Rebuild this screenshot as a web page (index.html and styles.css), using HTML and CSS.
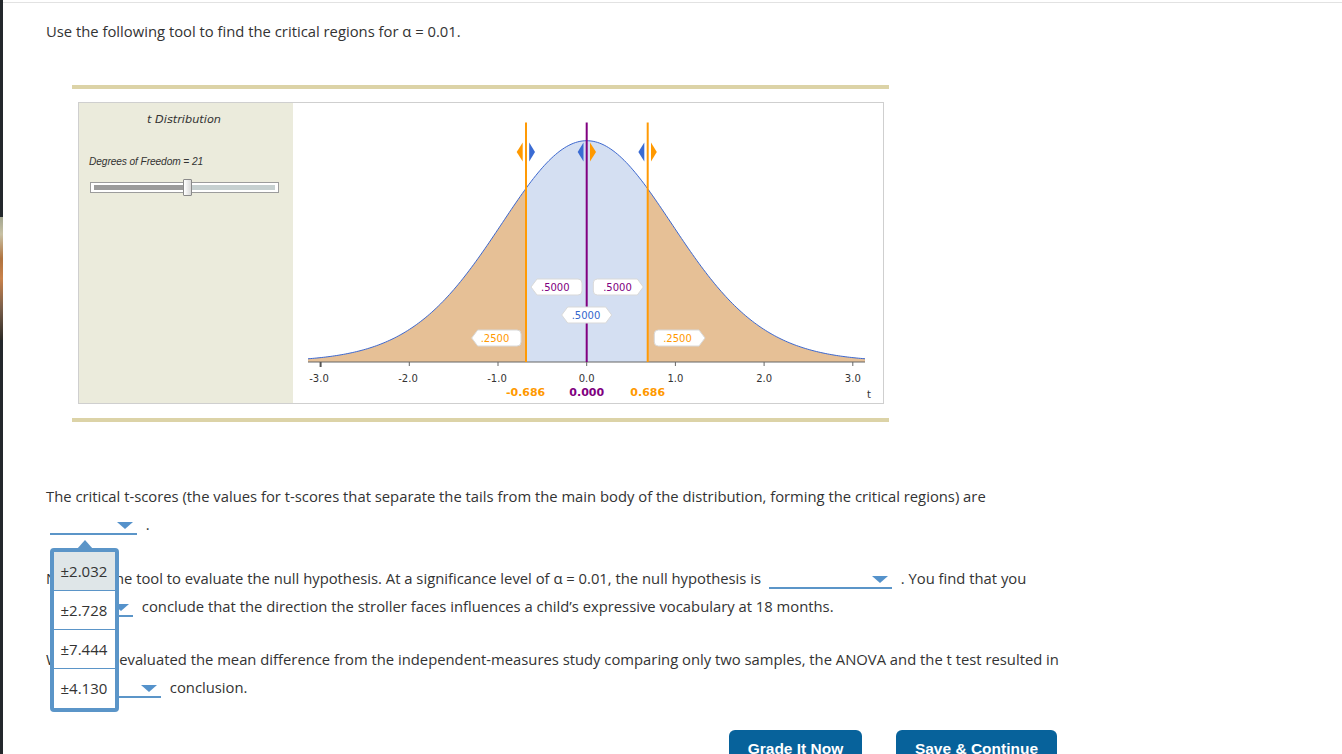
FILE: index.html
```html
<!DOCTYPE html>
<html lang="en">
<head>
<meta charset="utf-8">
<title>t Distribution critical regions</title>
<link rel="stylesheet" href="styles.css">
</head>
<body>
<div class="page">
  <aside class="edge"><div class="edge-photo"></div></aside>
  <main class="main">
    <p class="intro">Use the following tool to find the critical regions for α = 0.01.</p>

    <div class="tool">
      <div class="tool-bar"></div>
      <div class="tool-box">
        <div class="panel">
          <div class="panel-title">t Distribution</div>
          <div class="df-label">Degrees of Freedom = 21</div>
          <div class="slider">
            <div class="slider-track"></div>
            <div class="slider-thumb"></div>
          </div>
        </div>
        <div class="chart">
          <svg class="chart-svg" width="590" height="300" viewBox="293 103 590 300" xmlns="http://www.w3.org/2000/svg">
            <path id="tail-left" class="tail" d=""/>
            <path id="body-mid" class="body" d=""/>
            <path id="tail-right" class="tail" d=""/>
            <path id="curve" class="curve" d=""/>

            <line class="axis" x1="308" y1="362" x2="865" y2="362"/>
            <g class="ticks">
              <line x1="320.6" y1="362" x2="320.6" y2="367" class="tick-strong"/>
              <line x1="409.3" y1="362" x2="409.3" y2="366"/>
              <line x1="498" y1="362" x2="498" y2="366"/>
              <line x1="586.7" y1="362" x2="586.7" y2="366"/>
              <line x1="675.4" y1="362" x2="675.4" y2="366"/>
              <line x1="764.1" y1="362" x2="764.1" y2="366"/>
              <line x1="852.8" y1="362" x2="852.8" y2="366"/>
            </g>
            <g class="tick-labels">
              <text x="319" y="381.5">-3.0</text>
              <text x="408" y="381.5">-2.0</text>
              <text x="497" y="381.5">-1.0</text>
              <text x="586.7" y="381.5">0.0</text>
              <text x="675.4" y="381.5">1.0</text>
              <text x="764.1" y="381.5">2.0</text>
              <text x="852.8" y="381.5">3.0</text>
              <text x="869" y="397.5">t</text>
            </g>
            <g class="values">
              <text x="525.6" y="396" class="v-orange">-0.686</text>
              <text x="586.7" y="396" class="v-purple">0.000</text>
              <text x="647.7" y="396" class="v-orange">0.686</text>
            </g>

            <line class="cut cut-orange" x1="526" y1="122.5" x2="526" y2="362"/>
            <line class="cut cut-purple" x1="586.7" y1="122.5" x2="586.7" y2="362"/>
            <line class="cut cut-orange" x1="647.7" y1="122.5" x2="647.7" y2="362"/>

            <polygon class="h-orange" points="516.7,152 522.7,142.5 522.7,161.5"/>
            <polygon class="h-blue" points="529.2,142.5 535,152 529.2,161.5"/>
            <polygon class="h-blue" points="577.7,152 583.5,142.5 583.5,161.5"/>
            <polygon class="h-orange" points="590,142.5 596,152 590,161.5"/>
            <polygon class="h-blue" points="638.4,152 644.3,142.5 644.3,161.5"/>
            <polygon class="h-orange" points="651,142.5 656.8,152 651,161.5"/>

            <path class="tag" d="M531,287 L537,279 L578,279 Q582,279 582,283 L582,291 Q582,295 578,295 L537,295 Z"/>
            <text class="tag-text t-purple" x="555.3" y="290.6">.5000</text>
            <path class="tag" d="M593.3,283 Q593.3,279 597.3,279 L637.3,279 L643.3,287 L637.3,295 L597.3,295 Q593.3,295 593.3,291 Z"/>
            <text class="tag-text t-purple" x="617.5" y="290.6">.5000</text>
            <path class="tag" d="M561.7,315 L567.7,307 L605.7,307 L611.7,315 L605.7,323 L567.7,323 Z"/>
            <text class="tag-text t-blue" x="586" y="318.6">.5000</text>
            <path class="tag" d="M471.7,338 L477.7,330 L517,330 Q521,330 521,334 L521,342 Q521,346 517,346 L477.7,346 Z"/>
            <text class="tag-text t-orange" x="495" y="341.6">.2500</text>
            <path class="tag" d="M654.3,334 Q654.3,330 658.3,330 L699,330 L705,338 L699,346 L658.3,346 Q654.3,346 654.3,342 Z"/>
            <text class="tag-text t-orange" x="677.5" y="341.6">.2500</text>
          </svg>
        </div>
      </div>
      <div class="tool-bar"></div>
    </div>

    <div class="question">
      <p class="q">The critical t-scores (the values for t-scores that separate the tails from the main body of the distribution, forming the critical regions) are<br><span class="dd dd-first"><span class="dd-menu"><span class="dd-item is-active">±2.032</span><span class="dd-item">±2.728</span><span class="dd-item">±7.444</span><span class="dd-item">±4.130</span></span></span> .</p>
      <p class="q">Now use the tool to evaluate the null hypothesis. At a significance level of α = 0.01, the null hypothesis is <span class="dd dd-wide"></span> . You find that you<br><span class="dd dd-short"></span> conclude that the direction the stroller faces influences a child’s expressive vocabulary at 18 months.</p>
      <p class="q q-last">When you evaluated the mean difference from the independent-measures study comparing only two samples, the ANOVA and the t test resulted in<br><span class="dd dd-mid"></span> conclusion.</p>
    </div>

    <div class="buttons">
      <button class="btn btn-grade" type="button">Grade It Now</button>
      <button class="btn btn-save" type="button">Save &amp; Continue</button>
    </div>
  </main>
</div>
<script src="script.js"></script>
</body>
</html>
```

FILE: styles.css
```css
* { box-sizing: border-box; }
html, body { margin: 0; padding: 0; background: #fff; }
body {
  font-family: "Open Sans", "Liberation Sans", sans-serif;
  font-size: 14.8px;
  color: #333;
}
.page {
  display: flex;
  height: 754px;
  overflow: hidden;
}
.edge {
  width: 3px;
  flex: none;
  background: #23282c;
  padding-top: 217px;
}
.edge-photo {
  height: 123px;
  background: linear-gradient(#a3a690, #c8c1a4 14%, #b0733f 34%, #c9824b 50%, #7a5f4b 74%, #2c2a26);
}
.main {
  flex: 1;
  margin-top: 2px;
  border-top: 1px solid #e2e2e2;
  padding-left: 43px;
}
.intro {
  margin: 18px 0 0;
  line-height: 20px;
}

/* tool */
.tool {
  margin: 44px 0 0 26px;
  width: 817px;
}
.tool-bar {
  height: 4px;
  background: #dcd3a7;
}
.tool-box {
  display: flex;
  height: 302px;
  margin: 13px 5px 14px 6px;
  border: 1px solid #cfcfcf;
}
.panel {
  width: 214px;
  flex: none;
  background: #ebebdc;
  padding-top: 10px;
}
.panel-title {
  font-family: "DejaVu Sans", sans-serif;
  font-style: italic;
  font-size: 11.3px;
  line-height: 14px;
  text-align: center;
  padding-right: 4px;
}
.df-label {
  margin: 29px 0 0 10px;
  font-family: "Liberation Sans", sans-serif;
  font-style: italic;
  font-size: 10.2px;
  line-height: 12px;
  letter-spacing: -0.1px;
}
.slider {
  position: relative;
  margin: 14px 0 0 11px;
  width: 189px;
  height: 11px;
  border: 1px solid #9c9c9c;
  background: #fff;
  padding: 2px 3px;
}
.slider-track {
  height: 100%;
  background: linear-gradient(to right, #9b9b9b 0 51%, #c6d0d0 51%);
}
.slider-thumb {
  position: absolute;
  top: -4px;
  left: 92px;
  width: 9px;
  height: 17px;
  border: 1px solid #8a8a8a;
  border-radius: 1px;
  background: linear-gradient(to right, #ffffff, #d9d9d9);
}
.chart {
  flex: 1;
  background: #fff;
}
.chart-svg { display: block; }

.tail { fill: #e6c096; }
.body { fill: #d4dff2; }
.curve { fill: none; stroke: #3d68cf; stroke-width: 1; }
.axis { stroke: #666; stroke-width: 1; }
.ticks line { stroke: #666; stroke-width: 1; }
.ticks .tick-strong { stroke: #555; stroke-width: 2; }
.tick-labels text {
  font-family: "DejaVu Sans", sans-serif;
  font-size: 10px;
  fill: #333;
  text-anchor: middle;
}
.values text {
  font-family: "DejaVu Sans", sans-serif;
  font-weight: bold;
  font-size: 11px;
  text-anchor: middle;
}
.v-orange { fill: #ff9900; }
.v-purple { fill: #800080; }
.cut { stroke-width: 2; }
.cut-orange { stroke: #ff9a05; }
.cut-purple { stroke: #800080; }
.h-orange { fill: #ff9900; }
.h-blue { fill: #3a6bd3; }
.tag { fill: #fff; stroke: #d9d9d9; stroke-width: 1; }
.tag-text {
  font-family: "DejaVu Sans", sans-serif;
  font-size: 10px;
  text-anchor: middle;
}
.t-purple { fill: #800080; }
.t-blue { fill: #3366cc; }
.t-orange { fill: #ff9900; }

/* question */
.question { margin-top: 60px; }
.q {
  margin: 0 0 26px;
  line-height: 28px;
  white-space: nowrap;
}
.q.q-last { margin: -1px 0 0; }
.dd {
  display: inline-block;
  position: relative;
  height: 18px;
  border-bottom: 2px solid #5b95c8;
  vertical-align: baseline;
  margin: 0 5px -5px 4px;
}
.dd::after {
  content: "";
  position: absolute;
  right: 4px;
  bottom: 4px;
  border-left: 8px solid transparent;
  border-right: 8px solid transparent;
  border-top: 7px solid #5592cb;
}
.dd-first { width: 87px; }
.dd-wide { width: 123px; }
.dd-short { width: 83px; }
.dd-mid { width: 111px; }

.dd-menu {
  position: absolute;
  z-index: 5;
  left: 0;
  top: calc(100% + 15px);
  width: 69px;
  height: 164px;
  border: 4px solid #5b95c8;
  border-radius: 4px;
  background: #fff;
  display: flex;
  flex-direction: column;
}
.dd-menu::before {
  content: "";
  position: absolute;
  left: 23px;
  top: -12.5px;
  border-left: 8px solid transparent;
  border-right: 8px solid transparent;
  border-bottom: 9px solid #5b95c8;
}
.dd-item {
  display: block;
  height: 39px;
  line-height: 38px;
  padding-left: 6.5px;
  border-top: 1px solid #5b95c8;
  color: #333;
  font-size: 15px;
}
.dd-item.is-active {
  height: 38px;
  border-top: none;
  background: #dfe6e8;
}

/* buttons */
.buttons {
  display: flex;
  gap: 34px;
  margin: 29px 0 0 683px;
}
.btn {
  flex: none;
  border: none;
  border-radius: 6px;
  background: #07629b;
  color: #fff;
  font-family: "Liberation Sans", Arial, sans-serif;
  font-weight: bold;
  font-size: 15.5px;
  line-height: 20px;
  padding: 9px 0 12px;
  text-align: center;
}
.btn-grade { width: 133px; }
.btn-save { width: 161px; }
```

FILE: script.js
```js
(function () {
  var x0 = 586.7, sc = 88.7, base = 362, H = 221.3, df = 21;
  function X(t) { return x0 + sc * t; }
  function Y(t) { return base - H * Math.pow(1 + t * t / df, -(df + 1) / 2); }
  function line(a, b) {
    var n = Math.max(4, Math.ceil((b - a) * 40)), s = "";
    for (var i = 0; i <= n; i++) {
      var t = a + (b - a) * i / n;
      s += (i ? " L" : "M") + X(t).toFixed(2) + " " + Y(t).toFixed(2);
    }
    return s;
  }
  function area(a, b) {
    return line(a, b) + " L" + X(b).toFixed(2) + " " + base + " L" + X(a).toFixed(2) + " " + base + " Z";
  }
  var t0 = (308 - x0) / sc, t1 = (865 - x0) / sc, c = 0.686;
  document.getElementById("tail-left").setAttribute("d", area(t0, -c));
  document.getElementById("body-mid").setAttribute("d", area(-c, c));
  document.getElementById("tail-right").setAttribute("d", area(c, t1));
  document.getElementById("curve").setAttribute("d", line(t0, t1));
})();
```
